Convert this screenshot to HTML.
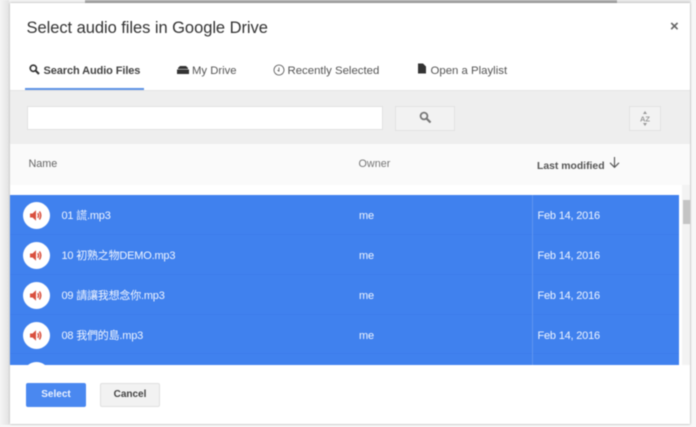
<!DOCTYPE html>
<html><head><meta charset="utf-8"><style>
html,body{margin:0;padding:0;width:696px;height:427px;overflow:hidden;background:#f3f3f3}
*{box-sizing:border-box}
body{font-family:"Liberation Sans","Noto Sans CJK TC",sans-serif;position:relative;filter:blur(.45px)}
.a{position:absolute}
.t{position:absolute;white-space:nowrap;line-height:16px}
.rowt{color:#f0f5ff;font-size:11px;letter-spacing:-.2px}
.ic{position:absolute;left:23px;width:27px;height:27px;border-radius:50%;background:#fff}
.sep{position:absolute;left:10px;width:669px;height:1px;background:#3c7cea}
</style></head><body>
<div class="a" style="left:85px;top:0;width:532px;height:3px;background:#aaa"></div>
<div class="a" style="left:617px;top:0;width:79px;height:3px;background:#e8e8e8"></div>
<div class="a" style="left:0;top:0;width:9px;height:427px;background:linear-gradient(90deg,#f5f5f5,#e4e4e4)"></div>
<div class="a" style="left:691px;top:0;width:5px;height:427px;background:#f7f7f7"></div>
<div class="a" style="left:0;top:425px;width:696px;height:2px;background:#f8f8f8"></div>
<div class="a" style="left:10px;top:3px;width:680px;height:421px;background:#fff;box-shadow:0 0 2px rgba(0,0,0,.4)"></div>

<div class="t" style="left:26.500px;top:18px;font-size:16.500px;letter-spacing:-.05px;line-height:20px;color:#333">Select audio files in Google Drive</div>
<div class="t" style="left:670px;top:19px;font-size:15px;color:#666;font-weight:bold">×</div>

<svg class="a" style="left:29px;top:64px" width="11" height="11" viewBox="0 0 11 11"><circle cx="4.300" cy="4.300" r="3.100" fill="none" stroke="#333" stroke-width="1.600"/><path d="M6.500 6.500L10 10" stroke="#333" stroke-width="2"/></svg>
<div class="t" style="left:43.500px;top:62.500px;font-size:11px;letter-spacing:-.1px;font-weight:bold;color:#444">Search Audio Files</div>
<div class="a" style="left:25px;top:88px;width:119px;height:2px;background:#5b92e5"></div>
<svg class="a" style="left:177px;top:65px" width="12" height="10" viewBox="0 0 12 10"><path d="M1 3L3 1H9L11 3V4H1ZM0 4.500H12V9H0Z" fill="#333"/></svg>
<div class="t" style="left:192px;top:62.500px;font-size:11.300px;color:#555">My Drive</div>
<svg class="a" style="left:273px;top:64px" width="12" height="12" viewBox="0 0 12 12"><circle cx="6" cy="6" r="5" fill="none" stroke="#555" stroke-width=".8"/><path d="M6 3.500V7.500M4.500 6L6 7.500" fill="none" stroke="#555" stroke-width=".8"/></svg>
<div class="t" style="left:287.500px;top:62.500px;font-size:11.400px;color:#555">Recently Selected</div>
<svg class="a" style="left:417px;top:63px" width="10" height="11" viewBox="0 0 10 11"><path d="M1 0.500H6L9 3.500V10.500H1Z" fill="#333"/></svg>
<div class="t" style="left:430.500px;top:62.500px;font-size:11.400px;color:#555">Open a Playlist</div>

<div class="a" style="left:10px;top:90px;width:680px;height:54px;background:#eeeeee;border-top:1px solid #e4e4e4"></div>
<div class="a" style="left:27px;top:106px;width:356px;height:24px;background:#fff;border:1px solid #e2e2e2"></div>
<div class="a" style="left:395px;top:106px;width:60px;height:25px;background:#f2f2f2;border:1px solid #e2e2e2"></div>
<svg class="a" style="left:419px;top:111px" width="13" height="13" viewBox="0 0 13 13"><circle cx="5" cy="5" r="3.400" fill="none" stroke="#777" stroke-width="1.800"/><path d="M7.500 7.500L11.500 11.500" stroke="#777" stroke-width="2.200"/></svg>
<div class="a" style="left:629px;top:106px;width:32px;height:25px;background:#f2f2f2;border:1px solid #e2e2e2"></div>
<svg class="a" style="left:637px;top:110px" width="16" height="17" viewBox="0 0 16 17"><path d="M8 1L10 4H6ZM8 16L10 13H6Z" fill="#999"/><text x="8" y="11.500" font-size="7.500" text-anchor="middle" fill="#999" font-family="Liberation Sans" font-weight="bold">AZ</text></svg>

<div class="a" style="left:10px;top:144px;width:680px;height:41px;background:#fafafa"></div>
<div class="t" style="left:28.500px;top:155.500px;font-size:10.800px;color:#666">Name</div>
<div class="t" style="left:358.500px;top:155.500px;font-size:10.800px;color:#777">Owner</div>
<div class="t" style="left:537px;top:158.500px;font-size:10.400px;font-weight:bold;color:#555">Last modified</div>
<svg class="a" style="left:608px;top:156px" width="13" height="13" viewBox="0 0 13 13"><path d="M6.500 1V11M2 6.800L6.500 11.300L11 6.800" fill="none" stroke="#555" stroke-width="1.100"/></svg>

<div class="a" style="left:682px;top:185px;width:8px;height:180px;background:#f3f3f3"></div>
<div class="a" style="left:683px;top:200px;width:7px;height:24px;background:#c4c4c4"></div>
<div class="a" style="left:10px;top:195px;width:669px;height:170px;background:#4081ee;overflow:hidden"></div>
<div class="sep" style="top:234px"></div><div class="sep" style="top:274px"></div><div class="sep" style="top:314px"></div><div class="sep" style="top:353px"></div>
<div class="a" style="left:532px;top:195px;width:1px;height:170px;background:#5f94f0"></div>

<div class="ic" style="top:202px"></div><div class="ic" style="top:242px"></div><div class="ic" style="top:282px"></div><div class="ic" style="top:322px"></div>
<div class="a" style="left:23px;top:362px;width:27px;height:3px;overflow:hidden"><div style="width:27px;height:27px;border-radius:50%;background:#fff"></div></div>

<svg class="a" style="left:29px;top:208px" width="15" height="15" viewBox="0 0 15 15"><path d="M1 5.500H3.500L7 2.200V12.800L3.500 9.500H1Z" fill="#d9503f"/><path d="M8.800 5.200Q10.300 7.500 8.800 9.800M10.500 3.500Q13 7.500 10.500 11.500" fill="none" stroke="#d9503f" stroke-width="1.500"/></svg>
<svg class="a" style="left:29px;top:248px" width="15" height="15" viewBox="0 0 15 15"><path d="M1 5.500H3.500L7 2.200V12.800L3.500 9.500H1Z" fill="#d9503f"/><path d="M8.800 5.200Q10.300 7.500 8.800 9.800M10.500 3.500Q13 7.500 10.500 11.500" fill="none" stroke="#d9503f" stroke-width="1.500"/></svg>
<svg class="a" style="left:29px;top:288px" width="15" height="15" viewBox="0 0 15 15"><path d="M1 5.500H3.500L7 2.200V12.800L3.500 9.500H1Z" fill="#d9503f"/><path d="M8.800 5.200Q10.300 7.500 8.800 9.800M10.500 3.500Q13 7.500 10.500 11.500" fill="none" stroke="#d9503f" stroke-width="1.500"/></svg>
<svg class="a" style="left:29px;top:328px" width="15" height="15" viewBox="0 0 15 15"><path d="M1 5.500H3.500L7 2.200V12.800L3.500 9.500H1Z" fill="#d9503f"/><path d="M8.800 5.200Q10.300 7.500 8.800 9.800M10.500 3.500Q13 7.500 10.500 11.500" fill="none" stroke="#d9503f" stroke-width="1.500"/></svg>

<div class="t rowt" style="left:61.500px;top:207.500px">01 謊.mp3</div>
<div class="t rowt" style="left:61.500px;top:247.500px">10 初熟之物DEMO.mp3</div>
<div class="t rowt" style="left:61.500px;top:287.500px">09 請讓我想念你.mp3</div>
<div class="t rowt" style="left:61.500px;top:327.500px">08 我們的島.mp3</div>
<div class="t rowt" style="left:359px;top:207.500px">me</div>
<div class="t rowt" style="left:359px;top:247.500px">me</div>
<div class="t rowt" style="left:359px;top:287.500px">me</div>
<div class="t rowt" style="left:359px;top:327.500px">me</div>
<div class="t rowt" style="left:537.500px;top:207.500px">Feb 14, 2016</div>
<div class="t rowt" style="left:537.500px;top:247.500px">Feb 14, 2016</div>
<div class="t rowt" style="left:537.500px;top:287.500px">Feb 14, 2016</div>
<div class="t rowt" style="left:537.500px;top:327.500px">Feb 14, 2016</div>

<div class="a" style="left:26px;top:383px;width:60px;height:24px;background:#4a88f0;border-radius:2px"></div>
<div class="t" style="left:26px;top:387px;width:60px;text-align:center;font-size:10px;font-weight:bold;color:#eaf1ff">Select</div>
<div class="a" style="left:100px;top:383px;width:60px;height:24px;background:#f2f2f2;border:1px solid #e0e0e0;border-radius:2px"></div>
<div class="t" style="left:100px;top:387px;width:60px;text-align:center;font-size:10px;font-weight:bold;color:#444">Cancel</div>
</body></html>
